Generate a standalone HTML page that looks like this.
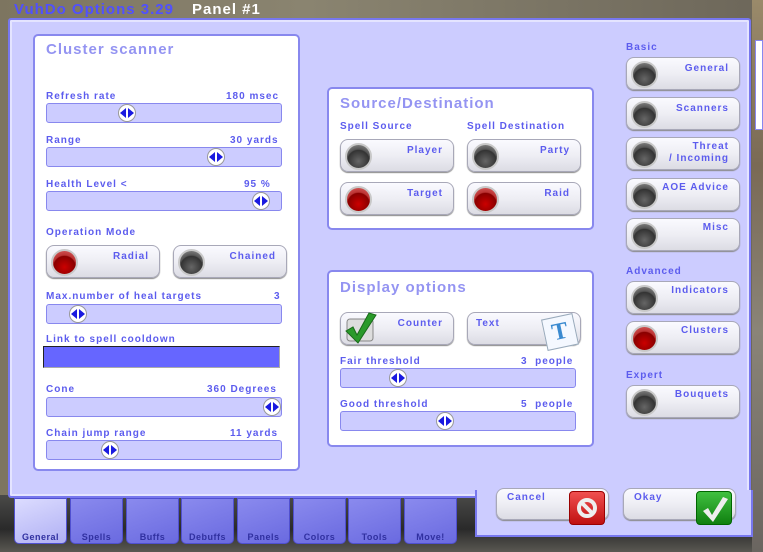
<!DOCTYPE html>
<html><head><meta charset="utf-8"><style>
*{margin:0;padding:0;box-sizing:border-box}
body{width:763px;height:552px;overflow:hidden;position:relative;font-family:"Liberation Sans",sans-serif;font-weight:bold;background:linear-gradient(90deg,#7d7560 0%,#8a8470 40%,#6d675a 100%)}
.a{position:absolute;font-weight:bold}
.bot{left:0;top:495px;width:763px;height:57px;background:linear-gradient(180deg,#4a4a48,#2a2a2a 60%,#5a5852)}
.rs{left:752px;top:0;width:11px;height:552px;background:linear-gradient(180deg,#9a8a6a,#7a6a55 30%,#8a8478 60%,#6a6560)}
.main{left:8px;top:18px;width:743px;height:480px;background:#ccccff;border:2px solid #7777ee;border-radius:3px;box-shadow:inset 0 0 0 2px #e4e4ff}
.box{background:#fff;border:2px solid #8888ee;border-radius:5px}
.lb{font-size:10px;color:#5c5cee;letter-spacing:1px;white-space:nowrap;font-weight:bold}
.tt{font-size:15px;color:#9494f2;letter-spacing:1px;font-weight:bold}
.sl{height:20px;background:#ccccff;border:1px solid #8888ee;border-radius:3px}
.th{width:18px;height:18px;border-radius:50%;background:#fff;border:1px solid #999;top:0}
.th:before{content:"";position:absolute;left:1px;top:3px;border:5px solid transparent;border-right:6px solid #1a1ae0;border-left:0}
.th:after{content:"";position:absolute;right:1px;top:3px;border:5px solid transparent;border-left:6px solid #1a1ae0;border-right:0}
.bt{height:33px;border-radius:8px;background:linear-gradient(180deg,#fafaff 0%,#eeeef4 50%,#dcdce4 100%);border:1px solid #a8a8b8;box-shadow:0 1px 1px #888}
.bt span{position:absolute;right:10px;top:5px;font-size:10px;font-weight:bold;color:#5c5cee;letter-spacing:1px;text-align:right;line-height:12px}
.led{position:absolute;left:4px;top:3px;width:27px;height:27px;border-radius:50%;border:2px solid #c8c8c8}
.g{background:radial-gradient(circle at 50% 70%,#666 0%,#333 55%,#555 60%,#999 100%)}
.r{background:radial-gradient(circle at 50% 70%,#c00 0%,#800 55%,#b33 60%,#d66 100%)}
.tab{top:498px;width:53px;height:46px;background:linear-gradient(160deg,#8a8aee,#6a6ae0);border:1px solid #5050d0;border-radius:0 0 5px 5px;font-size:9px;color:#3030a0;letter-spacing:.5px;text-align:center;padding-top:33px}
</style></head><body>
<div class="a bot"></div><div class="a rs"></div>
<div class="a" style="left:14px;top:1px;font-size:15px;color:#5050ff;letter-spacing:1px">VuhDo Options 3.29</div>
<div class="a" style="left:192px;top:1px;font-size:15px;color:#fff;letter-spacing:1px">Panel #1</div>
<div class="a main"></div>
<div class="a" style="left:755px;top:40px;width:8px;height:90px;background:#fff;border:1px solid #88e"></div>

<div class="a box" style="left:33px;top:34px;width:267px;height:437px"></div>
<div class="a tt" style="left:46px;top:41px">Cluster scanner</div>
<div class="a lb" style="left:46px;top:91px">Refresh rate</div><div class="a lb" style="left:226px;top:91px">180 msec</div>
<div class="a sl" style="left:46px;top:103px;width:236px"><div class="a th" style="left:71px"></div></div>
<div class="a lb" style="left:46px;top:135px">Range</div><div class="a lb" style="left:230px;top:135px">30 yards</div>
<div class="a sl" style="left:46px;top:147px;width:236px"><div class="a th" style="left:160px"></div></div>
<div class="a lb" style="left:46px;top:179px">Health Level &lt;</div><div class="a lb" style="left:244px;top:179px">95 %</div>
<div class="a sl" style="left:46px;top:191px;width:236px"><div class="a th" style="left:205px"></div></div>
<div class="a lb" style="left:46px;top:227px">Operation Mode</div>
<div class="a bt" style="left:46px;top:245px;width:114px"><div class="led r"></div><span>Radial</span></div>
<div class="a bt" style="left:173px;top:245px;width:114px"><div class="led g"></div><span>Chained</span></div>
<div class="a lb" style="left:46px;top:291px">Max.number of heal targets</div><div class="a lb" style="left:274px;top:291px">3</div>
<div class="a sl" style="left:46px;top:304px;width:236px"><div class="a th" style="left:22px"></div></div>
<div class="a lb" style="left:46px;top:334px">Link to spell cooldown</div>
<div class="a" style="left:43px;top:346px;width:237px;height:22px;background:#6666ff;border:1px solid #222;border-right-color:#aaa;border-bottom-color:#aaa"></div>
<div class="a lb" style="left:46px;top:384px">Cone</div><div class="a lb" style="left:207px;top:384px">360 Degrees</div>
<div class="a sl" style="left:46px;top:397px;width:236px"><div class="a th" style="left:216px"></div></div>
<div class="a lb" style="left:46px;top:428px">Chain jump range</div><div class="a lb" style="left:230px;top:428px">11 yards</div>
<div class="a sl" style="left:46px;top:440px;width:236px"><div class="a th" style="left:54px"></div></div>

<div class="a box" style="left:327px;top:87px;width:267px;height:143px"></div>
<div class="a tt" style="left:340px;top:95px">Source/Destination</div>
<div class="a lb" style="left:340px;top:121px">Spell Source</div><div class="a lb" style="left:467px;top:121px">Spell Destination</div>
<div class="a bt" style="left:340px;top:139px;width:114px"><div class="led g"></div><span>Player</span></div>
<div class="a bt" style="left:467px;top:139px;width:114px"><div class="led g"></div><span>Party</span></div>
<div class="a bt" style="left:340px;top:182px;width:114px"><div class="led r"></div><span>Target</span></div>
<div class="a bt" style="left:467px;top:182px;width:114px"><div class="led r"></div><span>Raid</span></div>

<div class="a box" style="left:327px;top:270px;width:267px;height:177px"></div>
<div class="a tt" style="left:340px;top:279px">Display options</div>
<div class="a bt" style="left:340px;top:312px;width:114px"><svg class="a" style="left:2px;top:-4px" width="34" height="36" viewBox="0 0 34 36"><rect x="4" y="10" width="26" height="22" rx="3" fill="#ddd" stroke="#888"/><path d="M3 22 L10 18 L14 26 L26 4 L33 6 L15 34 Z" fill="#2a9a2a" stroke="#1a6a1a"/></svg><span>Counter</span></div>
<div class="a bt" style="left:467px;top:312px;width:114px"><span style="left:8px;right:auto">Text</span><div class="a" style="left:76px;top:3px;width:32px;height:32px;background:#f4f8ff;border:1px solid #9ab;transform:rotate(-12deg);font:bold 24px 'Liberation Serif',serif;color:#3a8ad0;text-align:center;line-height:30px">T</div></div>
<div class="a lb" style="left:340px;top:356px">Fair threshold</div><div class="a lb" style="left:521px;top:356px">3&nbsp; people</div>
<div class="a sl" style="left:340px;top:368px;width:236px"><div class="a th" style="left:48px"></div></div>
<div class="a lb" style="left:340px;top:399px">Good threshold</div><div class="a lb" style="left:521px;top:399px">5&nbsp; people</div>
<div class="a sl" style="left:340px;top:411px;width:236px"><div class="a th" style="left:95px"></div></div>

<div class="a lb" style="left:626px;top:42px">Basic</div>
<div class="a bt" style="left:626px;top:57px;width:114px"><div class="led g"></div><span>General</span></div>
<div class="a bt" style="left:626px;top:97px;width:114px"><div class="led g"></div><span>Scanners</span></div>
<div class="a bt" style="left:626px;top:137px;width:114px"><div class="led g"></div><span style="top:3px">Threat<br>/ Incoming</span></div>
<div class="a bt" style="left:626px;top:178px;width:114px"><div class="led g"></div><span style="top:3px">AOE Advice</span></div>
<div class="a bt" style="left:626px;top:218px;width:114px"><div class="led g"></div><span style="top:3px">Misc</span></div>
<div class="a lb" style="left:626px;top:266px">Advanced</div>
<div class="a bt" style="left:626px;top:281px;width:114px"><div class="led g"></div><span style="top:3px">Indicators</span></div>
<div class="a bt" style="left:626px;top:321px;width:114px"><div class="led r"></div><span style="top:3px">Clusters</span></div>
<div class="a lb" style="left:626px;top:370px">Expert</div>
<div class="a bt" style="left:626px;top:385px;width:114px"><div class="led g"></div><span style="top:3px">Bouquets</span></div>

<div class="a" style="left:475px;top:490px;width:278px;height:47px;background:#ccccff;border:2px solid #7777ee;border-top:none"></div>
<div class="a bt" style="left:496px;top:488px;width:113px;height:32px"><span style="left:10px;right:auto;top:3px">Cancel</span><div class="a" style="left:72px;top:2px;width:36px;height:34px;border-radius:4px;background:linear-gradient(180deg,#f05050,#c01010);border:1px solid #900"><div class="a" style="left:7px;top:6px;width:20px;height:20px;border-radius:50%;border:4px solid #eee"></div><div class="a" style="left:15px;top:7px;width:4px;height:18px;background:#eee;transform:rotate(-45deg)"></div></div></div>
<div class="a bt" style="left:623px;top:488px;width:113px;height:32px"><span style="left:10px;right:auto;top:3px">Okay</span><div class="a" style="left:72px;top:2px;width:36px;height:34px;border-radius:4px;background:linear-gradient(180deg,#40c040,#108010);border:1px solid #060"><svg class="a" style="left:4px;top:3px" width="28" height="28" viewBox="0 0 28 28"><path d="M2 16 L7 13 L11 20 L22 2 L27 4 L12 27 Z" fill="#eee"/></svg></div></div>

<div class="a tab" style="left:14px;background:linear-gradient(160deg,#dcdcff,#b0b0f4)">General</div>
<div class="a tab" style="left:70px">Spells</div>
<div class="a tab" style="left:126px">Buffs</div>
<div class="a tab" style="left:181px">Debuffs</div>
<div class="a tab" style="left:237px">Panels</div>
<div class="a tab" style="left:293px">Colors</div>
<div class="a tab" style="left:348px">Tools</div>
<div class="a tab" style="left:404px">Move!</div>
</body></html>
